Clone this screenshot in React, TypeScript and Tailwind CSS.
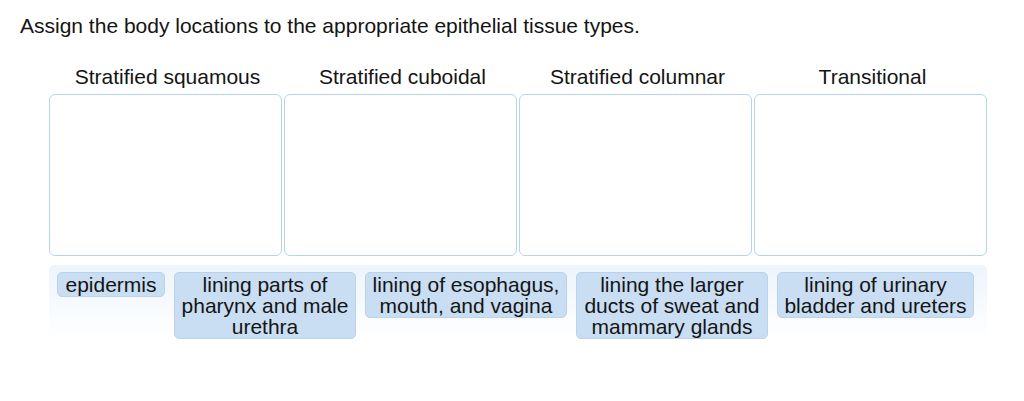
import React from 'react';

const COLUMNS = ['Stratified squamous', 'Stratified cuboidal', 'Stratified columnar', 'Transitional'];

const ITEMS = [
  { id: 'epidermis', label: 'epidermis', width: 'w-[108px]' },
  { id: 'pharynx', label: 'lining parts of pharynx and male urethra', width: 'w-[182px]' },
  { id: 'esophagus', label: 'lining of esophagus, mouth, and vagina', width: 'w-[202px]' },
  { id: 'sweat', label: 'lining the larger ducts of sweat and mammary glands', width: 'w-[192px]' },
  { id: 'urinary', label: 'lining of urinary bladder and ureters', width: 'w-[197px]' },
];

export default function App() {
  return (
    <div className="h-[401px] w-[1024px] bg-white text-[#141414] font-['Liberation_Sans',Arial,sans-serif]">
      <div className="px-5 pt-[14px]">
        <p className="text-[21px] leading-[24px]">
          Assign the body locations to the appropriate epithelial tissue types.
        </p>

        <div className="ml-[29px] mt-[27px] w-[938px]">
          {/* drop targets */}
          <div className="grid grid-cols-4 gap-[2px]">
            {COLUMNS.map((c) => (
              <div key={c} className="flex flex-col">
                <div className="text-center text-[21px] leading-[24px] pl-[4px]">{c}</div>
                <div className="mt-[5px] h-[162px] rounded-[6px] border border-[#b7d3ef] bg-white" />
              </div>
            ))}
          </div>

          {/* answer bank */}
          <div className="mt-[9px] h-[74px] rounded-[5px] bg-gradient-to-b from-[#edf4fb] to-white px-[8px] pt-[7px]">
            <div className="flex items-start gap-[9px]">
              {ITEMS.map((it) => (
                <div
                  key={it.id}
                  className={`${it.width} shrink-0 rounded-[5px] border border-[#b9d3ec] bg-[#c9def2] py-[1px] text-center text-[21px] leading-[21px]`}
                >
                  {it.label}
                </div>
              ))}
            </div>
          </div>
        </div>
      </div>
    </div>
  );
}
